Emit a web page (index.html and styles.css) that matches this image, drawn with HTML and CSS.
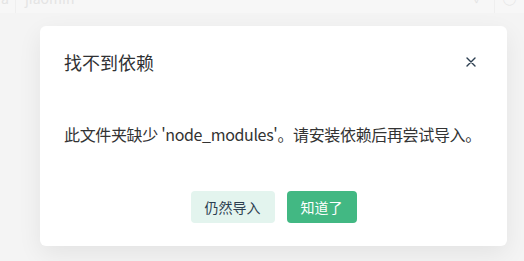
FILE: index.html
```html
<!DOCTYPE html>
<html lang="zh-CN">
<head>
<meta charset="utf-8">
<link rel="stylesheet" href="styles.css">
</head>
<body>
<div class="page">
  <div class="topbar">
    <span class="cell cell-left">a</span>
    <span class="cell cell-name">jiaomin</span>
    <span class="spacer"></span>
    <span class="cell cell-icon">✓</span>
    <span class="cell cell-round">○</span>
  </div>
  <div class="overlay">
    <div class="dialog">
      <div class="dialog-header">
        <span class="dialog-title">找不到依赖</span>
        <button class="close-btn" aria-label="关闭">
          <svg width="10" height="10" viewBox="0 0 10 10"><path d="M1 1L9 9M9 1L1 9" stroke="#2c3e50" stroke-width="1.4" stroke-linecap="round"/></svg>
        </button>
      </div>
      <div class="dialog-body">此文件夹缺少 'node_modules'。请安装依赖后再尝试导入。</div>
      <div class="dialog-footer">
        <button class="btn btn-secondary">仍然导入</button>
        <button class="btn btn-primary">知道了</button>
      </div>
    </div>
  </div>
</div>
</body>
</html>
```
FILE: styles.css
```css
* { box-sizing: border-box; }
html, body { margin: 0; padding: 0; }
body {
  width: 524px;
  height: 261px;
  overflow: hidden;
  background: #f4f4f4;
  font-family: "Noto Sans CJK SC", sans-serif;
}
.page {
  height: 261px;
  display: flex;
  flex-direction: column;
}
.topbar {
  height: 13px;
  display: flex;
  align-items: flex-end;
  background: #f7f7f7;
  color: #e4e4e4;
  font-size: 14px;
  line-height: 14px;
  overflow: hidden;
}
.cell {
  height: 13px;
  display: flex;
  align-items: flex-end;
  padding-bottom: 8px;
  line-height: 14px;
}
.cell-left { width: 16px; border-right: 1px solid #efefef; padding-left: 1px; }
.cell-name { padding-left: 9px; }
.spacer { flex: 1; }
.cell-icon { width: 20px; font-size: 12px; }
.cell-round { width: 30px; border-left: 1px solid #efefef; justify-content: center; }
.overlay {
  flex: 1;
  padding: 13px 17px 0 40px;
}
.dialog {
  width: 467px;
  height: 220px;
  background: #ffffff;
  border-radius: 6px;
  box-shadow: 0 8px 24px rgba(0, 0, 0, 0.07);
  display: flex;
  flex-direction: column;
}
.dialog-header {
  display: flex;
  align-items: center;
  justify-content: space-between;
  padding: 24px 24px 0 24px;
  height: 48px;
}
.dialog-title {
  font-size: 18px;
  line-height: 24px;
  color: #303133;
}
.close-btn {
  width: 16px;
  height: 16px;
  padding: 0;
  margin-right: 4px;
  border: none;
  background: transparent;
  display: flex;
  align-items: center;
  justify-content: center;
}
.dialog-body {
  padding: 48px 24px 0 24px;
  font-size: 16px;
  line-height: 24px;
  color: #333333;
  letter-spacing: -0.35px;
  white-space: nowrap;
}
.dialog-footer {
  display: flex;
  justify-content: center;
  gap: 12px;
  padding-top: 45px;
}
.btn {
  height: 32px;
  padding: 0 14px;
  border: none;
  border-radius: 4px;
  font-size: 14px;
  font-family: "Noto Sans CJK SC", sans-serif;
  line-height: 32px;
}
.btn-secondary {
  background: #e3f4ee;
  color: #2c3e50;
}
.btn-primary {
  background: #42b883;
  color: #ffffff;
}
```
